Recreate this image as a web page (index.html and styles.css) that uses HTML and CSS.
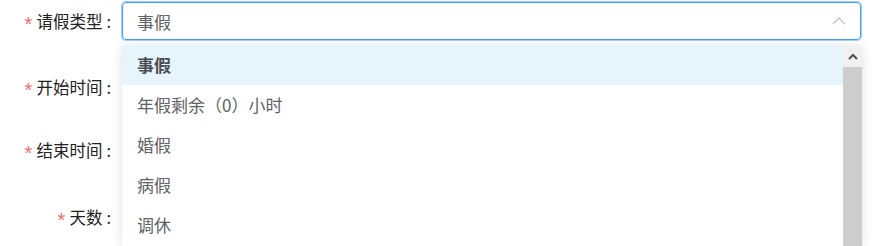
FILE: index.html
```html
<!DOCTYPE html>
<html lang="zh-CN">
<head>
    <meta charset="UTF-8">
    <meta name="viewport" content="width=device-width, initial-scale=1.0">
    <title>请假申请</title>
    <link rel="stylesheet" href="styles.css">
</head>
<body>

    <div class="form">
        <div class="form-row row-type">
            <label class="form-label"><span class="req">*</span>请假类型<span class="colon">:</span></label>
            <div class="select">
                <span class="select-value">事假</span>
                <svg class="select-arrow" width="14" height="10" viewBox="0 0 14 10">
                    <path d="M1 8 L7 2 L13 8" fill="none" stroke="#c0c4cc" stroke-width="1.3"/>
                </svg>
            </div>
        </div>
        <div class="form-row row-start">
            <label class="form-label"><span class="req">*</span>开始时间<span class="colon">:</span></label>
        </div>
        <div class="form-row row-end">
            <label class="form-label"><span class="req">*</span>结束时间<span class="colon">:</span></label>
        </div>
        <div class="form-row row-days">
            <label class="form-label"><span class="req">*</span>天数<span class="colon">:</span></label>
        </div>

        <div class="dropdown">
            <ul class="options">
                <li class="option selected">事假</li>
                <li class="option">年假剩余（0）小时</li>
                <li class="option">婚假</li>
                <li class="option">病假</li>
                <li class="option">调休</li>
            </ul>
            <div class="scrollbar">
                <div class="scroll-btn">
                    <svg width="10" height="7" viewBox="0 0 10 7">
                        <path d="M1 6 L5 2 L9 6" fill="none" stroke="#505050" stroke-width="2"/>
                    </svg>
                </div>
                <div class="scroll-thumb"></div>
            </div>
        </div>
    </div>

</body>
</html>
```

FILE: styles.css
```css
body {
    margin: 0;
    padding: 0;
    background-color: white;
    font-family: "Noto Sans CJK SC", "Noto Sans", sans-serif;
    overflow: hidden;
    height: 246px;
}

.form {
    position: relative;
    padding-top: 1px;
}

.form-row {
    display: flex;
    align-items: center;
    height: 40px;
}

.row-start { margin-top: 26px; }
.row-end { margin-top: 23px; }
.row-days { margin-top: 27px; }

.form-label {
    width: 111px;
    text-align: right;
    font-size: 16.5px;
    color: #222;
    flex-shrink: 0;
    white-space: nowrap;
}

.colon {
    margin-left: 4px;
}

.req {
    color: #f56c6c;
    font-family: "Liberation Sans", sans-serif;
    font-size: 20px;
    margin-right: 4px;
    position: relative;
    top: 3px;
}

.select {
    margin-left: 11px;
    height: 36px;
    border: 1px solid #409eff;
    border-radius: 4px;
    box-shadow: 0 0 0 1px #a0cfff;
    display: flex;
    align-items: center;
    justify-content: space-between;
    padding: 0 14px;
    width: 709px;
}

.select-value {
    font-size: 17px;
    color: #606266;
}

.dropdown {
    position: absolute;
    top: 45px;
    left: 122px;
    width: 740px;
    height: 201px;
    background-color: white;
    border-radius: 4px 4px 0 0;
    box-shadow: 0 2px 12px rgba(0, 0, 0, 0.12);
    display: flex;
    overflow: hidden;
}

.options {
    list-style: none;
    margin: 0;
    padding: 0;
    flex: 1;
}

.option {
    height: 40px;
    line-height: 40px;
    padding-left: 15px;
    font-size: 17px;
    color: #606266;
}

.option.selected {
    background-color: #e6f4fe;
    font-weight: bold;
    color: #4b4d52;
}

.scrollbar {
    width: 19px;
    background-color: #f1f1f1;
    display: flex;
    flex-direction: column;
}

.scroll-btn {
    height: 22px;
    display: flex;
    justify-content: center;
    align-items: center;
}

.scroll-thumb {
    flex: 1;
    background-color: #cdcdcd;
}
```
